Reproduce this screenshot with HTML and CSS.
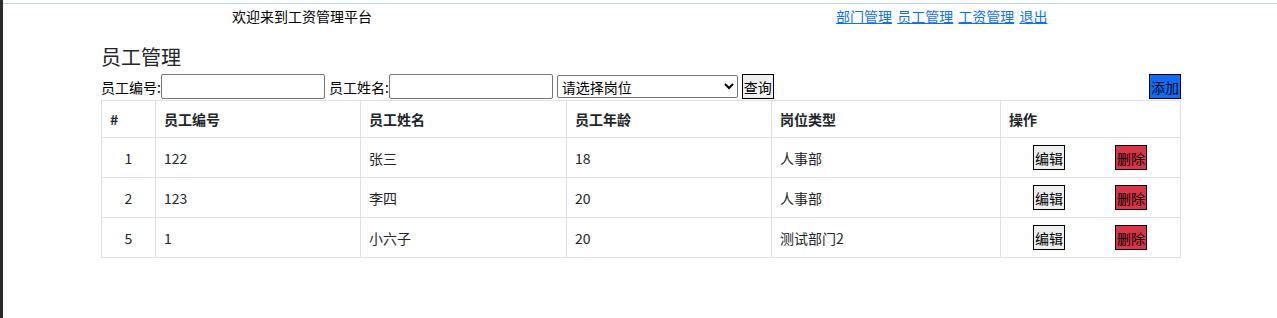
FILE: index.html
```html
<!DOCTYPE html>
<html>
    <head>
        <title>员工管理</title>
        <link rel="stylesheet" href="styles.css">
    </head>
    <body>
        <div class="topline"></div>
        <div class="header">
            <div class="welcome">欢迎来到工资管理平台</div>
            <div class="nav">
                <a href="#">部门管理</a>
                <a href="#">员工管理</a>
                <a href="#">工资管理</a>
                <a href="#">退出</a>
            </div>
        </div>
        <div class="main">
            <h3 class="title">员工管理</h3>
            <div class="search">
                <label>员工编号:<input type="text"></label>
                <label>员工姓名:<input type="text"></label>
                <select>
                    <option>请选择岗位</option>
                </select>
                <button class="btn">查询</button>
                <button class="btn btn-add">添加</button>
            </div>
            <table class="list">
                <thead>
                    <tr>
                        <th class="col-no">#</th>
                        <th class="col-id">员工编号</th>
                        <th class="col-name">员工姓名</th>
                        <th class="col-age">员工年龄</th>
                        <th class="col-job">岗位类型</th>
                        <th class="col-op">操作</th>
                    </tr>
                </thead>
                <tbody>
                    <tr>
                        <td class="num">1</td>
                        <td>122</td>
                        <td>张三</td>
                        <td>18</td>
                        <td>人事部</td>
                        <td><div class="ops"><button class="btn">编辑</button><button class="btn btn-del">删除</button></div></td>
                    </tr>
                    <tr>
                        <td class="num">2</td>
                        <td>123</td>
                        <td>李四</td>
                        <td>20</td>
                        <td>人事部</td>
                        <td><div class="ops"><button class="btn">编辑</button><button class="btn btn-del">删除</button></div></td>
                    </tr>
                    <tr>
                        <td class="num">5</td>
                        <td>1</td>
                        <td>小六子</td>
                        <td>20</td>
                        <td>测试部门2</td>
                        <td><div class="ops"><button class="btn">编辑</button><button class="btn btn-del">删除</button></div></td>
                    </tr>
                </tbody>
            </table>
        </div>
    </body>
</html>
```

FILE: styles.css
```css
html {
    height: 100%;
}
body {
    margin: 0;
    min-height: 100%;
    border-left: 3px solid #2a2a2a;
    font-family: "Noto Sans CJK SC", "Noto Sans", sans-serif;
    font-size: 14px;
    color: #212529;
    background-color: #fff;
}
.topline {
    margin-top: 3px;
    border-top: 1px solid #bfe0e0;
}
.header {
    display: flex;
    height: 24px;
    align-items: center;
    color: #000;
}
.welcome {
    margin-left: 229px;
    width: 604px;
}
.nav a {
    color: #0d6efd;
    margin-right: 2px;
}
.main {
    margin-left: 98px;
    width: 1080px;
}
.title {
    margin: 17px 0 5px 0;
    font-size: 20px;
    font-weight: normal;
    line-height: 24px;
}
.search {
    display: flex;
    align-items: center;
    height: 25px;
    margin-bottom: 1px;
    color: #000;
}
.search label {
    display: flex;
    align-items: center;
    margin-right: 4px;
}
.search input {
    width: 164px;
    height: 25px;
    box-sizing: border-box;
    margin: 0;
    padding: 0 1px;
    border: 1px solid #767676;
    border-radius: 2px;
    font-size: 14px;
}
.search select {
    width: 181px;
    height: 23px;
    margin: 0 4px 0 0;
    border: 1px solid #767676;
    border-radius: 2px;
    font-family: "Noto Sans CJK SC", sans-serif;
    font-size: 14px;
    color: #000;
    background-color: #fff;
}
.btn {
    flex-shrink: 0;
    margin: 0;
    padding: 0 1px;
    height: 25px;
    white-space: nowrap;
    border: 1px solid #000;
    background-color: #efefef;
    font-family: "Noto Sans CJK SC", sans-serif;
    font-size: 14px;
    color: #000;
}
.btn-add {
    margin-left: auto;
    background-color: #0d6efd;
}
.btn-del {
    background-color: #dc3545;
}
.list {
    width: 1080px;
    table-layout: fixed;
    border-collapse: collapse;
    border: 1px solid #dee2e6;
}
.list th,
.list td {
    box-sizing: border-box;
    border: 1px solid #dee2e6;
    padding: 0 8px;
    text-align: left;
    vertical-align: middle;
}
.list th {
    height: 37px;
    font-weight: bold;
}
.list td {
    height: 40px;
}
.list td.num {
    text-align: center;
}
.col-no { width: 54px; }
.col-id { width: 205px; }
.col-name { width: 206px; }
.col-age { width: 205px; }
.col-job { width: 229px; }
.ops {
    display: flex;
    gap: 50px;
    padding-left: 24px;
}
```
